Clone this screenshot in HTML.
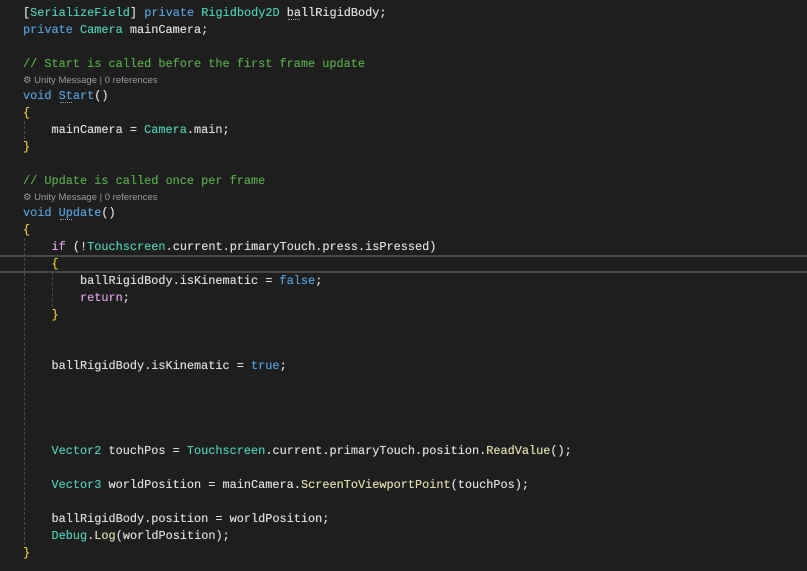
<!DOCTYPE html>
<html><head><meta charset="utf-8"><style>
html,body{margin:0;padding:0;background:#1e1e1e;width:807px;height:571px;overflow:hidden}
.l{position:absolute;left:23px;height:17px;line-height:17px;font-family:"Liberation Mono",monospace;font-size:11.88px;color:#dcdcdc;white-space:pre;text-shadow:0 0 0.4px currentColor}
.lens{position:absolute;left:23px;height:15px;line-height:15px;font-family:"Liberation Sans",sans-serif;font-size:9.5px;color:#999}
.k{color:#569cd6}.t{color:#4ec9b0}.c{color:#57a64a}.f{color:#d8a0df}.m{color:#dcdcaa}.b{color:#e8c23a}
.g{position:absolute;width:0;border-left:1px dashed #4a4a4a}
.u{position:relative}
.u:after{content:"";position:absolute;left:1px;width:12px;bottom:0;border-bottom:1px dotted #999}
</style></head><body>
<div style="position:absolute;left:0;right:0;top:255px;height:14px;border-top:2px solid #464646;border-bottom:2px solid #464646"></div>
<div class="g" style="left:24px;top:121px;height:18px"></div>
<div class="g" style="left:24px;top:238px;height:307px"></div>
<div class="g" style="left:52px;top:272px;height:35px"></div>
<div class="l" style="top:5px">[<span class="t">SerializeField</span>] <span class="k">private</span> <span class="t">Rigidbody2D</span> <span class="u">ballRigidBody</span>;</div>
<div class="l" style="top:22px"><span class="k">private</span> <span class="t">Camera</span> mainCamera;</div>
<div class="l c" style="top:56px">// Start is called before the first frame update</div>
<div class="lens" style="top:73px">⚙ Unity Message | 0 references</div>
<div class="l" style="top:88px"><span class="k">void</span> <span class="k u">Start</span>()</div>
<div class="l b" style="top:105px">{</div>
<div class="l" style="top:122px">    mainCamera = <span class="t">Camera</span>.main;</div>
<div class="l b" style="top:139px">}</div>
<div class="l c" style="top:173px">// Update is called once per frame</div>
<div class="lens" style="top:190px">⚙ Unity Message | 0 references</div>
<div class="l" style="top:205px"><span class="k">void</span> <span class="k u">Update</span>()</div>
<div class="l b" style="top:222px">{</div>
<div class="l" style="top:239px">    <span class="f">if</span> (!<span class="t">Touchscreen</span>.current.primaryTouch.press.isPressed)</div>
<div class="l" style="top:256px">    <span class="b">{</span></div>
<div class="l" style="top:273px">        ballRigidBody.isKinematic = <span class="k">false</span>;</div>
<div class="l" style="top:290px">        <span class="f">return</span>;</div>
<div class="l" style="top:307px">    <span class="b">}</span></div>
<div class="l" style="top:358px">    ballRigidBody.isKinematic = <span class="k">true</span>;</div>
<div class="l" style="top:443px">    <span class="t">Vector2</span> touchPos = <span class="t">Touchscreen</span>.current.primaryTouch.position.<span class="m">ReadValue</span>();</div>
<div class="l" style="top:477px">    <span class="t">Vector3</span> worldPosition = mainCamera.<span class="m">ScreenToViewportPoint</span>(touchPos);</div>
<div class="l" style="top:511px">    ballRigidBody.position = worldPosition;</div>
<div class="l" style="top:528px">    <span class="t">Debug</span>.<span class="m">Log</span>(worldPosition);</div>
<div class="l b" style="top:545px">}</div>
</body></html>
